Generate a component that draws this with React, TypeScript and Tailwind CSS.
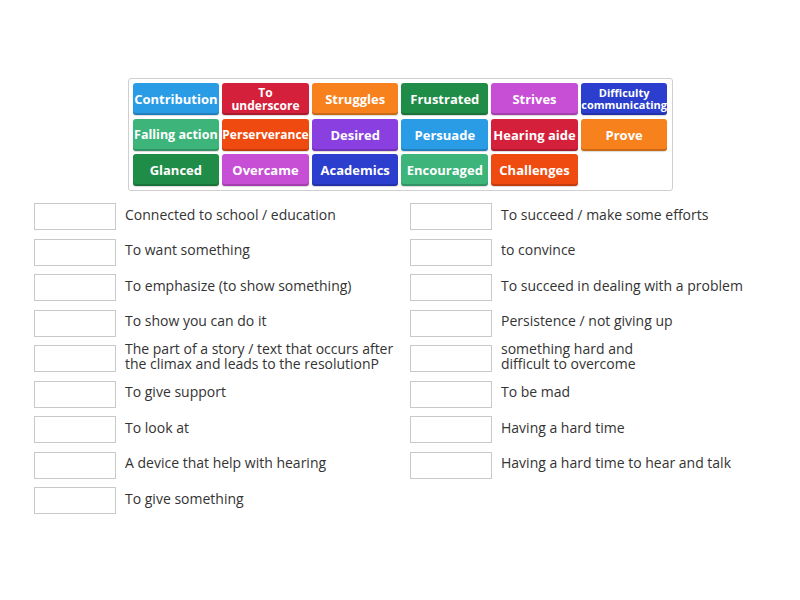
const tiles: { label: string[]; bg: string; size?: string }[] = [
  { label: ['Contribution'], bg: 'bg-[#2a9ce6]' },
  { label: ['To', 'underscore'], bg: 'bg-[#d4203a]', size: 'text-[12px] leading-[13px]' },
  { label: ['Struggles'], bg: 'bg-[#f7811c]' },
  { label: ['Frustrated'], bg: 'bg-[#1f8c47]' },
  { label: ['Strives'], bg: 'bg-[#c74fd5]' },
  { label: ['Difficulty', 'communicating'], bg: 'bg-[#2b3ecd]', size: 'text-[11px] leading-[12px]' },
  { label: ['Falling action'], bg: 'bg-[#3db47a]', size: 'text-[12.5px] leading-[16px]' },
  { label: ['Perserverance'], bg: 'bg-[#ef4a10]', size: 'text-[12px] leading-[16px]' },
  { label: ['Desired'], bg: 'bg-[#8a3fe0]' },
  { label: ['Persuade'], bg: 'bg-[#2a9ce6]' },
  { label: ['Hearing aide'], bg: 'bg-[#d4203a]' },
  { label: ['Prove'], bg: 'bg-[#f7811c]' },
  { label: ['Glanced'], bg: 'bg-[#1f8c47]' },
  { label: ['Overcame'], bg: 'bg-[#c74fd5]' },
  { label: ['Academics'], bg: 'bg-[#2b3ecd]' },
  { label: ['Encouraged'], bg: 'bg-[#3db47a]' },
  { label: ['Challenges'], bg: 'bg-[#ef4a10]' },
];

const leftItems: string[][] = [
  ['Connected to school / education'],
  ['To want something'],
  ['To emphasize (to show something)'],
  ['To show you can do it'],
  ['The part of a story / text that occurs after', 'the climax and leads to the resolutionP'],
  ['To give support'],
  ['To look at'],
  ['A device that help with hearing'],
  ['To give something'],
];

const rightItems: string[][] = [
  ['To succeed / make some efforts'],
  ['to convince'],
  ['To succeed in dealing with a problem'],
  ['Persistence / not giving up'],
  ['something hard and', 'difficult to overcome'],
  ['To be mad'],
  ['Having a hard time'],
  ['Having a hard time to hear and talk'],
];

function Tile({ label, bg, size }: { label: string[]; bg: string; size?: string }) {
  return (
    <div
      className={`h-[32px] rounded-[3px] ${bg} flex flex-col items-center justify-center text-white font-bold text-center shadow-[inset_0_-2px_0_rgba(0,0,0,0.18),0_1px_1px_rgba(0,0,0,0.15)] ${size ?? 'text-[13px] leading-[16px]'}`}
    >
      {label.map((l, i) => (
        <span key={i}>{l}</span>
      ))}
    </div>
  );
}

function Row({ lines }: { lines: string[] }) {
  return (
    <div className="flex items-center h-[27px]">
      <div className="w-[82px] h-[27px] shrink-0 border border-[#c9c9c9] bg-white" />
      <div className="ml-[9px] -mt-[5px] text-[14px] leading-[15px] text-[#333]">
        {lines.map((l, i) => (
          <div key={i}>{l}</div>
        ))}
      </div>
    </div>
  );
}

export default function App() {
  return (
    <div className="w-[800px] h-[600px] bg-white overflow-hidden" style={{ fontFamily: '"Open Sans", sans-serif' }}>
      <div className="pt-[78px] flex justify-center">
        <div className="w-[545px] p-[4px] border border-[#cfcfcf] rounded-[3px] grid grid-cols-6 gap-x-[3px] gap-y-[3.5px]">
          {tiles.map((t, i) => (
            <Tile key={i} {...t} />
          ))}
        </div>
      </div>
      <div className="mt-[12px] pl-[34px] flex">
        <div className="w-[376px] flex flex-col gap-[8.5px]">
          {leftItems.map((l, i) => (
            <Row key={i} lines={l} />
          ))}
        </div>
        <div className="w-[375px] flex flex-col gap-[8.5px]">
          {rightItems.map((l, i) => (
            <Row key={i} lines={l} />
          ))}
        </div>
      </div>
    </div>
  );
}
